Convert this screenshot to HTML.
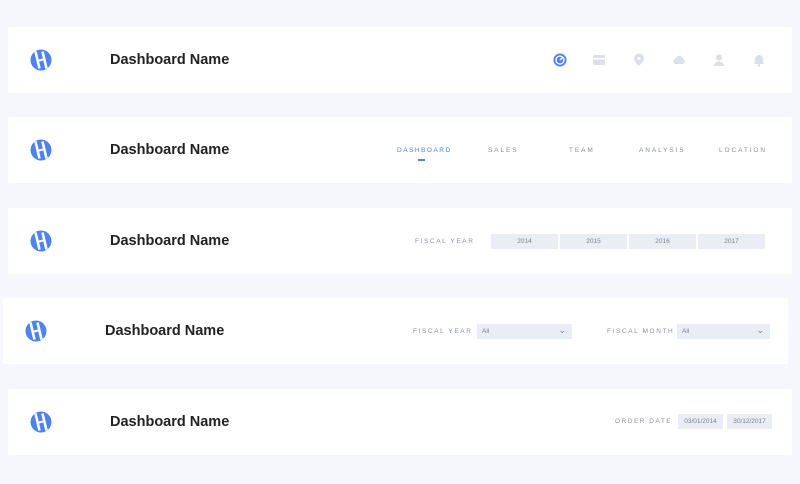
<!DOCTYPE html>
<html><head><style>
body{margin:0;width:800px;height:484px;background:#f6f7fc;position:relative;overflow:hidden;font-family:"Liberation Sans",sans-serif}
.card{position:absolute;background:#fff;height:66px;width:784px;border-radius:2px}
.logo{position:absolute;left:22px;top:22px;width:22px;height:22px}
.title{position:absolute;left:102px;top:25px;font-size:14.5px;font-weight:bold;color:#222}
.ab{position:absolute;font-size:6.5px;letter-spacing:1.9px;color:#8a8f9c}
.box{position:absolute;background:#eaedf4;font-size:6.5px;color:#7d8290;text-align:center;line-height:15px;height:15px}
.ic{position:absolute;top:26px;width:14px;height:14px}
</style></head><body>
<svg width="0" height="0" style="position:absolute"><defs><g id="lg"><circle cx="11" cy="11" r="10.5" fill="#4f82ef"/><path d="M5.5 2.5 L9.5 19.5 M12.5 2.5 L16.5 19.5" stroke="#fff" stroke-width="2.6" fill="none"/><path d="M9 11.5 L13 10.5" stroke="#fff" stroke-width="2" fill="none"/></g></defs></svg>

<div class="card" style="left:8px;top:27px">
<svg class="logo" viewBox="0 0 22 22"><use href="#lg"/></svg>
<div class="title">Dashboard Name</div>
<svg class="ic" style="left:545px" viewBox="0 0 14 14"><circle cx="7" cy="7" r="6.5" fill="#4f82ef"/><circle cx="7" cy="7" r="4" fill="none" stroke="#fff" stroke-width="1.3"/><path d="M7 7 L9.5 4.5" stroke="#fff" stroke-width="1.5"/></svg>
<svg class="ic" style="left:584px" viewBox="0 0 14 14"><rect x="1" y="2" width="12" height="10" rx="1" fill="#dcdfe6"/><rect x="1" y="5" width="12" height="1.5" fill="#fff"/></svg>
<svg class="ic" style="left:624px" viewBox="0 0 14 14"><path d="M7 13 C3 9 2 7 2 5.5 A5 5 0 0 1 12 5.5 C12 7 11 9 7 13Z" fill="#dcdfe6"/><circle cx="7" cy="5.5" r="1.6" fill="#fff"/></svg>
<svg class="ic" style="left:664px" viewBox="0 0 14 14"><path d="M3 11 A3 3 0 0 1 3.5 5.5 A4 4 0 0 1 11 5.5 A3 3 0 0 1 11 11Z" fill="#dcdfe6"/></svg>
<svg class="ic" style="left:704px" viewBox="0 0 14 14"><circle cx="7" cy="4.5" r="3" fill="#dcdfe6"/><path d="M2 13 A5 4.5 0 0 1 12 13Z" fill="#dcdfe6"/></svg>
<svg class="ic" style="left:744px" viewBox="0 0 14 14"><path d="M2 11 L3 9.5 V6 A4 4 0 0 1 11 6 V9.5 L12 11Z" fill="#dcdfe6"/><circle cx="7" cy="12.3" r="1.3" fill="#dcdfe6"/></svg>
</div>

<div class="card" style="left:8px;top:117px">
<svg class="logo" viewBox="0 0 22 22"><use href="#lg"/></svg>
<div class="title">Dashboard Name</div>
<div class="ab" style="left:389px;top:30px;color:#4f82ef;letter-spacing:1.5px">DASHBOARD</div>
<div style="position:absolute;left:410px;top:42px;width:7px;height:2px;background:#4f82ef"></div>
<div class="ab" style="left:480px;top:30px">SALES</div>
<div class="ab" style="left:561px;top:30px">TEAM</div>
<div class="ab" style="left:631px;top:30px">ANALYSIS</div>
<div class="ab" style="left:711px;top:30px">LOCATION</div>
</div>

<div class="card" style="left:8px;top:208px">
<svg class="logo" viewBox="0 0 22 22"><use href="#lg"/></svg>
<div class="title">Dashboard Name</div>
<div class="ab" style="left:407px;top:30px;letter-spacing:1.6px">FISCAL YEAR</div>
<div class="box" style="left:483px;top:26px;width:67px">2014</div>
<div class="box" style="left:552px;top:26px;width:67px">2015</div>
<div class="box" style="left:621px;top:26px;width:67px">2016</div>
<div class="box" style="left:690px;top:26px;width:67px">2017</div>
</div>

<div class="card" style="left:3px;top:298px;width:785px">
<svg class="logo" viewBox="0 0 22 22"><use href="#lg"/></svg>
<div class="title">Dashboard Name</div>
<div class="ab" style="left:410px;top:30px;letter-spacing:1.6px">FISCAL YEAR</div>
<div class="box" style="left:474px;top:26px;width:95px;text-align:left;padding-left:5px;box-sizing:border-box">All<span style="position:absolute;right:6px;top:-1px;font-size:9px">&#8964;</span></div>
<div class="ab" style="left:604px;top:30px;letter-spacing:1.6px">FISCAL MONTH</div>
<div class="box" style="left:674px;top:26px;width:93px;text-align:left;padding-left:5px;box-sizing:border-box">All<span style="position:absolute;right:6px;top:-1px;font-size:9px">&#8964;</span></div>
</div>

<div class="card" style="left:8px;top:389px">
<svg class="logo" viewBox="0 0 22 22"><use href="#lg"/></svg>
<div class="title">Dashboard Name</div>
<div class="ab" style="left:607px;top:29px;letter-spacing:1.5px">ORDER DATE</div>
<div class="box" style="left:670px;top:25px;width:45px">03/01/2014</div>
<div class="box" style="left:719px;top:25px;width:45px">30/12/2017</div>
</div>
</body></html>
